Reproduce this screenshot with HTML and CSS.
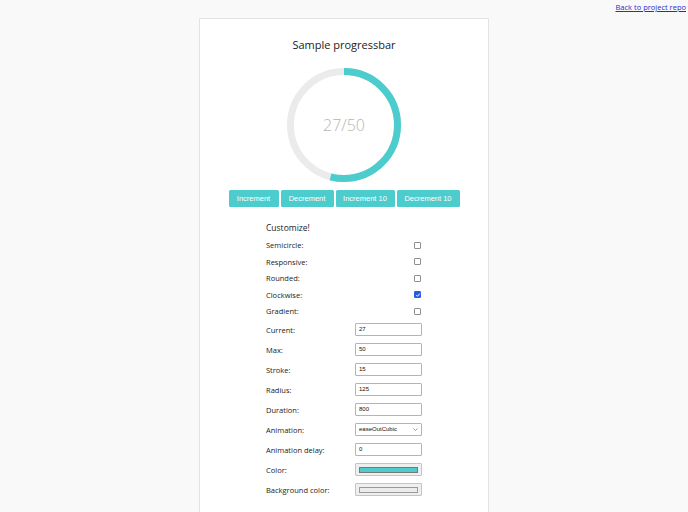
FILE: index.html
```html
<!DOCTYPE html>
<html>
<head>
<meta charset="utf-8">
<link rel="stylesheet" href="styles.css">
</head>
<body>
<div class="topbar"><a class="repo" href="#">Back to project repo</a></div>
<div class="card">
  <h1 class="title">Sample progressbar</h1>
  <div class="ring">
    <svg width="120" height="120" viewBox="0 0 120 120">
      <circle cx="60" cy="60" r="53.5" fill="none" stroke="#ebebeb" stroke-width="7"/>
      <circle cx="60" cy="60" r="53.5" fill="none" stroke="#4ccccd" stroke-width="7" stroke-dasharray="181.5 400" transform="rotate(-90 60 60)"/>
    </svg>
    <div class="ring-text">27/50</div>
  </div>
  <div class="buttons">
    <button class="btn b1">Increment</button>
    <button class="btn b2">Decrement</button>
    <button class="btn b3">Increment 10</button>
    <button class="btn b4">Decrement 10</button>
  </div>
  <div class="form">
    <div class="form-title">Customize!</div>
    <div class="row chk"><span class="lbl">Semicircle:</span><span class="box"></span></div>
    <div class="row chk"><span class="lbl">Responsive:</span><span class="box"></span></div>
    <div class="row chk"><span class="lbl">Rounded:</span><span class="box"></span></div>
    <div class="row chk"><span class="lbl">Clockwise:</span><span class="box on"><svg width="6" height="6" viewBox="0 0 6 6"><path d="M1.3 3.1 L2.5 4.3 L4.8 1.6" fill="none" stroke="#fff" stroke-width="1"/></svg></span></div>
    <div class="row chk"><span class="lbl">Gradient:</span><span class="box"></span></div>
    <div class="row inp"><span class="lbl">Current:</span><span class="field">27</span></div>
    <div class="row inp"><span class="lbl">Max:</span><span class="field">50</span></div>
    <div class="row inp"><span class="lbl">Stroke:</span><span class="field">15</span></div>
    <div class="row inp"><span class="lbl">Radius:</span><span class="field">125</span></div>
    <div class="row inp"><span class="lbl">Duration:</span><span class="field">800</span></div>
    <div class="row inp"><span class="lbl">Animation:</span><span class="field select">easeOutCubic<svg class="chev" width="5" height="3" viewBox="0 0 5 3"><path d="M0.5 0.5 L2.5 2.5 L4.5 0.5" fill="none" stroke="#777" stroke-width="0.7"/></svg></span></div>
    <div class="row inp"><span class="lbl">Animation delay:</span><span class="field">0</span></div>
    <div class="row inp"><span class="lbl">Color:</span><span class="field color"><span class="swatch teal"></span></span></div>
    <div class="row inp"><span class="lbl">Background color:</span><span class="field color"><span class="swatch grey"></span></span></div>
  </div>
</div>
</body>
</html>
```
FILE: styles.css
```css
html, body {
  margin: 0;
  padding: 0;
  height: 100%;
  overflow: hidden;
}
body {
  background: #f9f9f9;
  font-family: "Open Sans", "Liberation Sans", sans-serif;
  color: #222;
}
.topbar {
  position: absolute;
  top: 2px;
  right: 2px;
  font-size: 7.5px;
  line-height: 10px;
}
.repo {
  font-size: 7.5px;
  color: #2a2ad0;
  text-decoration: underline;
}
.card {
  margin: 18px auto 0;
  width: 288px;
  min-height: 600px;
  background: #fff;
  border: 1px solid #e3e3e3;
  display: flex;
  flex-direction: column;
  align-items: center;
}
.title {
  margin: 18px 0 0;
  font-size: 11px;
  font-weight: 400;
  line-height: 16px;
  color: #222;
}
.ring {
  margin-top: 12px;
  width: 120px;
  height: 120px;
  display: grid;
  place-items: center;
}
.ring svg, .ring-text {
  grid-area: 1 / 1;
}
.ring-text {
  font-size: 16px;
  font-weight: 300;
  color: #b5b5b5;
}
.buttons {
  margin-top: 5px;
  display: flex;
  gap: 2px;
}
.btn {
  height: 17px;
  padding: 0;
  border: none;
  border-radius: 1.5px;
  background: #4ccccd;
  color: #fff;
  font-family: "Liberation Sans", Arial, sans-serif;
  font-size: 7.5px;
}
.b1 { width: 50px; }
.b2 { width: 53px; }
.b3 { width: 59px; }
.b4 { width: 63px; }
.form {
  margin-top: 14px;
  width: 156px;
  display: flex;
  flex-direction: column;
}
.form-title {
  font-size: 8.5px;
  line-height: 14px;
  margin-bottom: 2px;
  color: #222;
}
.row {
  display: flex;
  justify-content: space-between;
  align-items: center;
  font-size: 7.5px;
  color: #222;
}
.row.chk { height: 16.5px; padding-right: 1px; }
.row.inp { height: 20px; }
.box {
  width: 5px;
  height: 5px;
  border: 0.8px solid #8f8f8f;
  border-radius: 1px;
  background: #fff;
  display: flex;
}
.box.on {
  background: #2a5ddb;
  border-color: #2a5ddb;
}
.box svg { margin: -0.5px; }
.field {
  box-sizing: border-box;
  width: 67px;
  height: 13px;
  border: 1px solid #b4b4b4;
  border-radius: 1px;
  background: #fff;
  font-family: "Liberation Sans", Arial, sans-serif;
  font-size: 6px;
  line-height: 11px;
  padding-left: 3px;
  color: #111;
  display: flex;
  align-items: center;
}
.field.select {
  justify-content: space-between;
  padding-right: 3px;
}
.field.color {
  background: #efefef;
  border-color: #c4c4c4;
  padding: 0 3px;
  justify-content: center;
}
.swatch {
  display: block;
  width: 100%;
  height: 4px;
  border: 0.7px solid #777;
}
.swatch.teal { background: #4ccccd; }
.swatch.grey { background: #ebebeb; border-color: #9a9a9a; }
```
